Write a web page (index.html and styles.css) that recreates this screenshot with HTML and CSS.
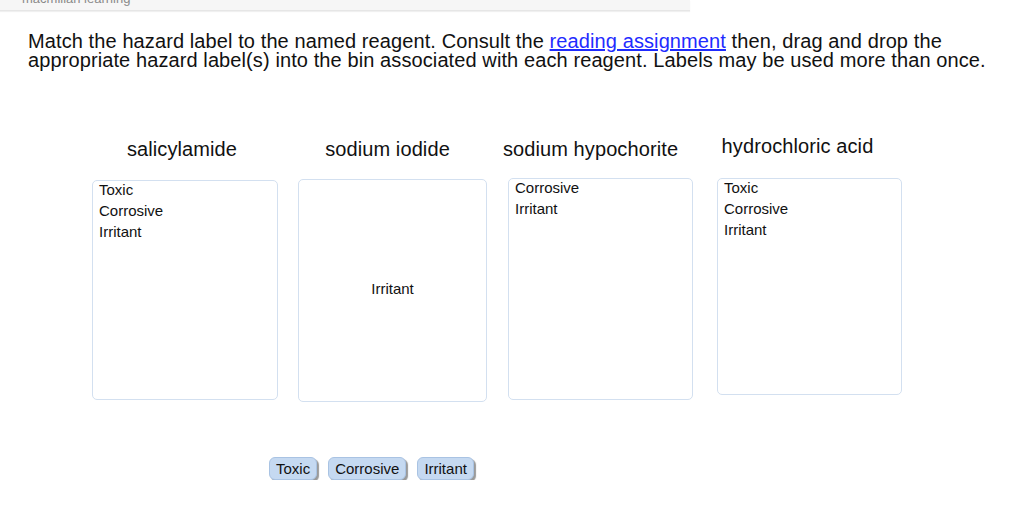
FILE: index.html
```html
<!DOCTYPE html>
<html>
<head>
<meta charset="utf-8">
<link rel="stylesheet" href="styles.css">
</head>
<body>
<div class="topbar"><span class="brand">macmillan learning</span></div>
<p class="prompt">Match the hazard label to the named reagent. Consult the <a href="#" class="link">reading assignment</a> then, drag and drop the appropriate hazard label(s) into the bin associated with each reagent. Labels may be used more than once.</p>
<div class="bins">
  <div class="col col-1">
    <div class="title">salicylamide</div>
    <div class="box">
      <div class="item">Toxic</div>
      <div class="item">Corrosive</div>
      <div class="item">Irritant</div>
    </div>
  </div>
  <div class="col col-2">
    <div class="title">sodium iodide</div>
    <div class="box box-center">
      <div class="item">Irritant</div>
    </div>
  </div>
  <div class="col col-3">
    <div class="title">sodium hypochorite</div>
    <div class="box">
      <div class="item">Corrosive</div>
      <div class="item">Irritant</div>
    </div>
  </div>
  <div class="col col-4">
    <div class="title">hydrochloric acid</div>
    <div class="box">
      <div class="item">Toxic</div>
      <div class="item">Corrosive</div>
      <div class="item">Irritant</div>
    </div>
  </div>
</div>
<div class="labels">
  <span class="chip">Toxic</span>
  <span class="chip">Corrosive</span>
  <span class="chip">Irritant</span>
</div>
</body>
</html>
```
FILE: styles.css
```css
html, body {
  margin: 0;
  padding: 0;
  background: #ffffff;
  font-family: "Liberation Sans", Arial, sans-serif;
  color: #111111;
}
.topbar {
  width: 690px;
  height: 10px;
  background: #f6f6f6;
  border-bottom: 1px solid #e6e6e6;
  box-shadow: 0 1px 1px #f0f0f0;
  overflow: hidden;
}
.brand {
  display: block;
  margin-left: 22px;
  margin-top: -9px;
  font-size: 13px;
  line-height: 16px;
  color: #8a8a8a;
}
.prompt {
  margin: 21px 0 0 28px;
  width: 980px;
  font-size: 20px;
  line-height: 19px;
  letter-spacing: 0.1px;
  color: #111111;
}
.link {
  color: #1f2bff;
  text-decoration: underline;
}
.bins {
  display: flex;
  align-items: flex-start;
  margin-top: 67px;
  padding-left: 92px;
}
.col {
  display: flex;
  flex-direction: column;
}
.title {
  font-size: 20px;
  line-height: 24px;
  letter-spacing: 0.1px;
  text-align: center;
  color: #111111;
}
.box {
  box-sizing: border-box;
  border: 1px solid #d3e0f0;
  border-radius: 5px;
  padding: 0 6px;
  font-size: 15px;
  line-height: 21px;
}
.item {
  position: relative;
  top: -2px;
}
.box-center {
  display: flex;
  align-items: center;
  justify-content: center;
}
.col-1 { width: 186px; }
.col-1 .title { margin: 0 3px 19px -3px; }
.col-1 .box { height: 220px; }

.col-2 { width: 189px; margin-left: 20px; }
.col-2 .title { margin: 0 5px 18px -5px; }
.col-2 .box { height: 223px; }

.col-3 { width: 185px; margin-left: 21px; }
.col-3 .title { margin: 0 10px 17px -10px; }
.col-3 .box { height: 222px; }

.col-4 { width: 185px; margin-left: 24px; margin-top: -3px; }
.col-4 .title { margin: 0 12px 20px -12px; }
.col-4 .box { height: 217px; }

.labels {
  display: flex;
  gap: 11px;
  margin-top: 55px;
  padding-left: 269px;
}
.chip {
  display: inline-block;
  background: #c5d9f1;
  border: 1px solid #a9c3e3;
  border-radius: 6px;
  padding: 1px 6px 0;
  font-size: 15px;
  line-height: 20px;
  color: #111111;
  box-shadow: 2px 2px 1px #9a9a9a;
}
```
